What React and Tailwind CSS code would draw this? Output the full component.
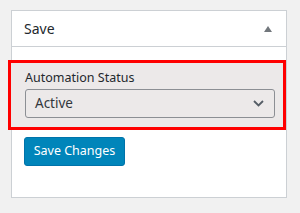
import React from 'react';

const font = { fontFamily: '"Noto Sans", "Open Sans", sans-serif' };

export default function App() {
  return (
    <div className="w-[300px] h-[213px] bg-[#f1f1f1] pt-[10px] pl-[11px]" style={font}>
      <div className="w-[276px] h-[188px] bg-white border border-[#ccd0d4]">
        <div className="h-[36px] flex items-center justify-between pl-[12px] pr-[14px] border-b border-[#ccd0d4]">
          <span className="text-[14px] text-[#23282d]">Save</span>
          <svg width="8" height="6" viewBox="0 0 8 6">
            <path d="M4 0 L8 6 L0 6 Z" fill="#72777c" />
          </svg>
        </div>
        <div className="-ml-[4px] mt-[13px] w-[278px] h-[70px] border-[3px] border-[#ff0000] bg-[#ece9e9] pl-[14px] pt-[7px]">
          <div className="text-[12.5px] leading-[16px] text-[#23282d]">Automation Status</div>
          <div className="mt-[3px] w-[250px] h-[29px] border border-[#8c8f94] rounded-[3px] flex items-center justify-between pl-[9px] pr-[10px]">
            <span className="text-[13.5px] text-[#32373c]">Active</span>
            <svg width="11" height="7" viewBox="0 0 11 7">
              <path d="M1 1 L5.5 5.5 L10 1" fill="none" stroke="#555d66" strokeWidth="1.8" />
            </svg>
          </div>
        </div>
        <div className="pl-[12px] pt-[7px]">
          <button className="w-[101px] h-[29px] bg-[#0085ba] border border-[#0073aa] rounded-[3px] text-white text-[12.5px]">
            Save Changes
          </button>
        </div>
      </div>
    </div>
  );
}
